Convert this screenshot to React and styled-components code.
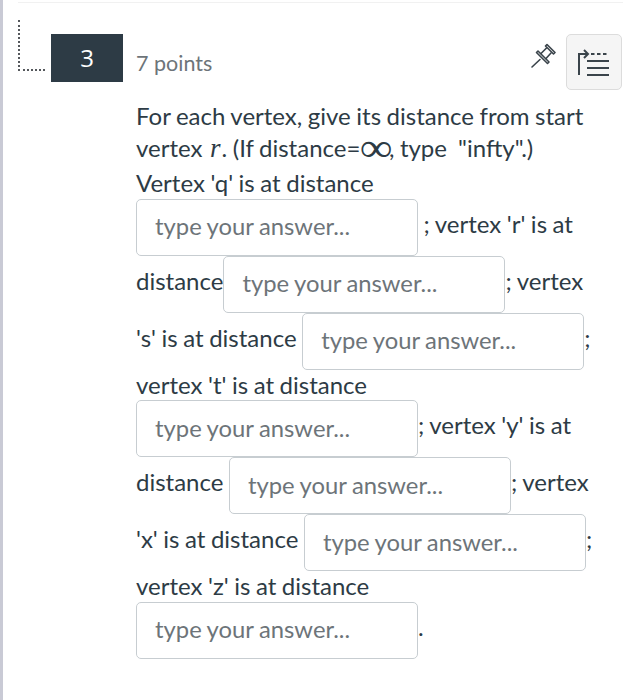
import React from 'react';
import styled, { createGlobalStyle } from 'styled-components';

const GlobalStyle = createGlobalStyle`
  html, body {
    margin: 0;
    padding: 0;
    background: #fff;
    font-family: Lato, "Open Sans", sans-serif;
  }
`;

const Page = styled.div`
  width: 623px;
  height: 700px;
  box-sizing: border-box;
  overflow: hidden;
  border-left: 3px solid #c9cad5;
  padding-top: 2px;
`;

const TopRule = styled.div`
  height: 1px;
  margin-left: 15px;
  background: #f1f1f1;
`;

const Header = styled.div`
  display: flex;
  align-items: flex-start;
  padding: 17px 1px 0 15px;
`;

const Corner = styled.div`
  width: 27px;
  height: 51px;
  box-sizing: border-box;
  border-left: 2px dotted #55585c;
  border-bottom: 2px dotted #55585c;
`;

const Number = styled.div`
  width: 72px;
  height: 48px;
  box-sizing: border-box;
  padding-bottom: 2px;
  margin: 14px 13px 0 6px;
  display: flex;
  align-items: center;
  justify-content: center;
  background: #2d3b45;
  color: #fff;
  font-family: "Open Sans", sans-serif;
  font-size: 24px;
`;

const Points = styled.div`
  margin-top: 28px;
  font-size: 21.5px;
  line-height: 30px;
  color: #6d7479;
`;

const Tools = styled.div`
  margin-left: auto;
  margin-top: 14px;
  display: flex;
  align-items: center;
  gap: 10px;
`;

const PinBox = styled.div`
  display: flex;
  margin-top: -12px;
`;

const ToolButton = styled.div`
  width: 56px;
  height: 56px;
  box-sizing: border-box;
  display: flex;
  align-items: center;
  justify-content: center;
  background: #f5f5f5;
  border: 1px solid #dcdcdc;
  border-radius: 5px;
`;

const Prose = styled.div`
  width: 457px;
  margin-left: 133px;
  margin-top: 10px;
  font-size: 24px;
  word-spacing: -0.6px;
  color: #2d3b45;
`;

const Intro = styled.div`
  line-height: 32px;
  margin-bottom: 4px;
`;

const Answers = styled.div`
  line-height: 30.5px;
`;

const Answer = styled.input`
  width: 282px;
  height: 57px;
  box-sizing: border-box;
  padding: 0 18px 2px;
  border: 1px solid #c7cdd1;
  border-radius: 5px;
  background: #fff;
  font-family: inherit;
  font-size: 23.8px;
  word-spacing: -0.6px;
  color: #2d3b45;
  outline: none;
  vertical-align: -3px;

  &::placeholder {
    color: #6d7479;
    opacity: 1;
  }
`;

const MathVar = styled.i`
  font-family: "Liberation Serif", serif;
  font-size: 27px;
  line-height: 0;
  margin: 0 1px 0 2px;
`;

const Infinity = styled.span`
  display: inline-block;
  font-family: "Liberation Serif", serif;
  font-size: 40px;
  line-height: 0;
  vertical-align: -4px;
  transform: translateX(2px) scaleX(1.15);
`;

const PinIcon = () => (
  <svg width="26" height="26" viewBox="0 0 26 26" fill="none" stroke="#3a444b" strokeWidth="1.6" strokeLinejoin="round" strokeLinecap="round">
    <path d="M2 24l8-7.5" />
    <path d="M6.5 9.5l1.5-1.5 11 11-1.5 1.5z" />
    <path d="M11 10.5l5.5-5.5M16 15.5l5-5.5" />
    <path d="M15.5 3l1.5-1.5 8 8-1.5 1.5z" />
  </svg>
);

const OutlineIcon = () => (
  <svg width="32" height="27" viewBox="0 0 32 27" fill="none" stroke="#3a444b" strokeWidth="2">
    <path d="M1 26V5h8" />
    <path d="M6 1l4 4-4 4" />
    <path d="M13 5h18" strokeDasharray="3.5 2.5" />
    <path d="M9 12h22M9 19h22M9 26h22" />
  </svg>
);

const App = () => (
  <Page>
    <GlobalStyle />
    <TopRule />
    <Header>
      <Corner />
      <Number>3</Number>
      <Points>7 points</Points>
      <Tools>
        <PinBox>
          <PinIcon />
        </PinBox>
        <ToolButton>
          <OutlineIcon />
        </ToolButton>
      </Tools>
    </Header>
    <Prose>
      <Intro>
        For each vertex, give its distance from start vertex <MathVar>r</MathVar>. (If distance=<Infinity>∞</Infinity>, type &nbsp;"infty".)
      </Intro>
      <Answers>
        Vertex 'q' is at distance <Answer placeholder="type your answer..." /> ; vertex 'r' is at distance<Answer placeholder="type your answer..." />; vertex 's' is at distance <Answer placeholder="type your answer..." />;
        <br />
        vertex 't' is at distance <Answer placeholder="type your answer..." />; vertex 'y' is at distance <Answer placeholder="type your answer..." />; vertex 'x' is at distance <Answer placeholder="type your answer..." />;
        <br />
        vertex 'z' is at distance <Answer placeholder="type your answer..." />.
      </Answers>
    </Prose>
  </Page>
);

export default App;
